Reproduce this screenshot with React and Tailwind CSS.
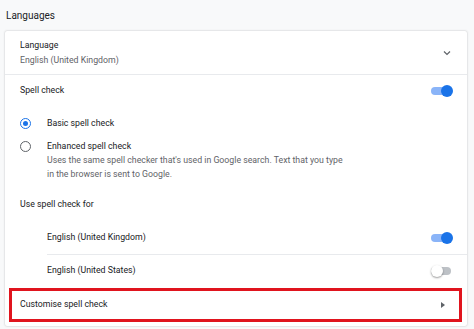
import React from 'react';

function Toggle({ on }) {
  return (
    <div className="relative w-[22px] h-[12px] flex items-center">
      <div className={`w-[20px] h-[8px] rounded-full ${on ? 'bg-[#8ab4f8]' : 'bg-[#bdc1c6]'}`} />
      <div
        className={`absolute top-0 w-[12px] h-[12px] rounded-full ${
          on ? 'right-0 bg-[#1a73e8]' : 'left-0 bg-white shadow-[0_1px_2px_rgba(0,0,0,0.4)]'
        }`}
      />
    </div>
  );
}

function Radio({ checked }) {
  return (
    <div
      className={`w-[11px] h-[11px] rounded-full border-[1.5px] flex items-center justify-center ${
        checked ? 'border-[#1a73e8]' : 'border-[#5f6368]'
      }`}
    >
      {checked && <div className="w-[5px] h-[5px] rounded-full bg-[#1a73e8]" />}
    </div>
  );
}

export default function App() {
  return (
    <div className="w-[474px] h-[329px] bg-[#f8f9fa] overflow-hidden font-['Roboto',sans-serif] text-[8.75px] text-[#202124]">
      <div className="h-[31px] flex items-center pl-[6px] text-[10px] text-[#202124]">Languages</div>

      <div className="ml-[5px] w-[462px] bg-white rounded-[2px] shadow-[0_0_2px_rgba(60,64,67,0.35)] pb-[4px]">
        {/* Language */}
        <div className="h-[44px] flex items-center pl-[15px] pr-[16px] border-b border-[#e8eaed]">
          <div className="flex-1 leading-[15px]">
            <div>Language</div>
            <div className="text-[#5f6368]">English (United Kingdom)</div>
          </div>
          <svg width="8" height="6" viewBox="0 0 8 6">
            <path d="M1 1.5 L4 4.5 L7 1.5" stroke="#5f6368" strokeWidth="1.2" fill="none" />
          </svg>
        </div>

        {/* Spell check */}
        <div className="h-[32px] flex items-center pl-[15px] pr-[14px]">
          <div className="flex-1">Spell check</div>
          <Toggle on />
        </div>

        {/* Radio options */}
        <div className="mt-[4px] h-[25px] flex items-center pl-[15px]">
          <Radio checked />
          <div className="ml-[16px]">Basic spell check</div>
        </div>
        <div className="flex pl-[15px] pt-[3px] pb-[7px]">
          <div className="pt-[1.5px]">
            <Radio />
          </div>
          <div className="ml-[16px] leading-[14px]">
            <div>Enhanced spell check</div>
            <div className="text-[#5f6368]">
              Uses the same spell checker that's used in Google search. Text that you type
              <br />
              in the browser is sent to Google.
            </div>
          </div>
        </div>

        <div className="h-[34px] flex items-center pl-[15px]">Use spell check for</div>

        <div className="h-[32px] flex items-center pl-[42px] pr-[14px]">
          <div className="flex-1">English (United Kingdom)</div>
          <Toggle on />
        </div>
        <div className="ml-[42px] border-t border-[#e8eaed]" />
        <div className="h-[32px] flex items-center pl-[42px] pr-[14px]">
          <div className="flex-1">English (United States)</div>
          <Toggle />
        </div>

        <div className="mt-[1px] ml-[4px] mr-[5px] h-[34px] border-[3px] border-[#e0141e] flex items-center pl-[8px] pr-[14px]">
          <div className="flex-1">Customise spell check</div>
          <svg width="4" height="6" viewBox="0 0 4 6">
            <path d="M0 0 L4 3 L0 6 Z" fill="#5f6368" />
          </svg>
        </div>
      </div>
    </div>
  );
}
